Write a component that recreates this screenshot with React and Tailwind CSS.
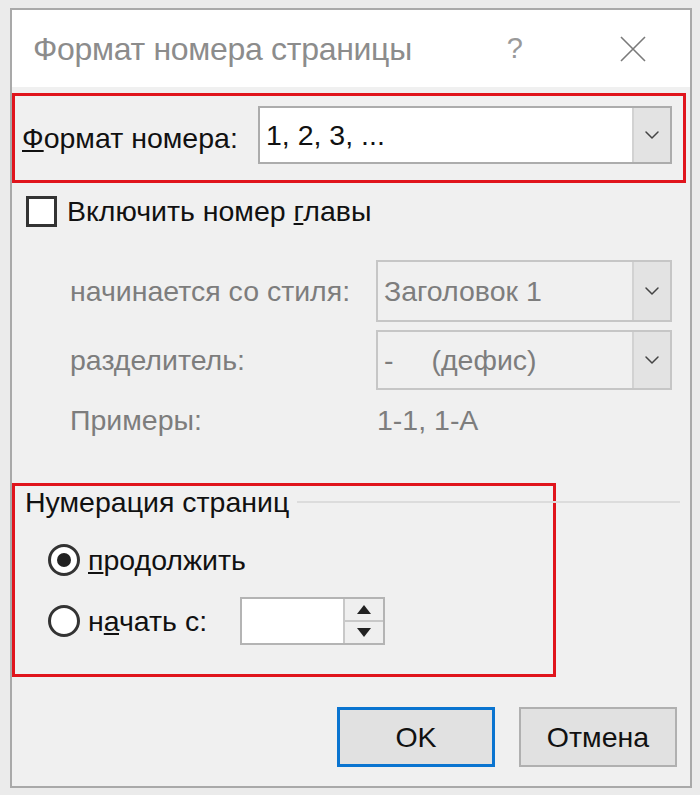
import { ChevronDown } from "lucide-react"

const font = { fontFamily: '"Liberation Sans", Arial, sans-serif' }

function Combo({ value, disabled, w, h }) {
  return (
    <div
      className={`flex ${w} ${h} border-2 ${disabled ? "border-[#c6c6c6] bg-[#f0f0f0]" : "border-[#acacac] bg-white"}`}
    >
      <div className={`flex-1 flex items-center pl-[6px] whitespace-nowrap ${disabled ? "text-[#7d7d7d]" : "text-[#111]"}`}>
        {value}
      </div>
      <div className="w-[38px] flex items-center justify-center bg-[#e3e3e3] border-l-2 border-[#d2d2d2]">
        <ChevronDown className="w-[24px] h-[24px] text-[#444]" strokeWidth={1.5} />
      </div>
    </div>
  )
}

export default function App() {
  return (
    <div className="min-h-screen bg-[#ebebeb] pt-[8px] pl-[10px] text-[28.5px] leading-none" style={font}>
      <div className="w-[682px] h-[780px] border-2 border-[#a9a9a9] bg-[#f0f0f0] flex flex-col">
        {/* title bar */}
        <div className="h-[77px] bg-white flex items-center pl-[21px] text-[#8c8c8c]">
          <span className="text-[32px] tracking-[-0.3px] whitespace-nowrap">Формат номера страницы</span>
          <span className="ml-auto text-[29px] mr-[96px] text-[#999]">?</span>
          <svg width="28" height="28" viewBox="0 0 28 28" className="mr-[43px]">
            <path d="M2 2 L26 26 M26 2 L2 26" stroke="#7a7a7a" strokeWidth="1.6" fill="none" />
          </svg>
        </div>

        {/* number format */}
        <div className="mt-[6px] w-[674px] h-[90px] border-[3px] border-[#e0141c] flex items-center pl-[7px] pb-[6px]">
          <span className="w-[236px] text-[#111] pt-[6px] whitespace-nowrap">
            <span className="underline underline-offset-2">Ф</span>ормат номера:
          </span>
          <Combo value="1, 2, 3, ..." w="w-[414px]" h="h-[58px]" />
        </div>

        {/* chapter number */}
        <div className="mt-[13px] flex items-center ml-[14px]">
          <div className="w-[31px] h-[31px] border-[3px] border-[#333] bg-white" />
          <span className="ml-[10px] text-[#111] whitespace-nowrap">
            Включить номер <span className="underline underline-offset-2">г</span>лавы
          </span>
        </div>

        <div className="mt-[33px] flex items-center pl-[58px]">
          <span className="w-[306px] text-[#7d7d7d] whitespace-nowrap">начинается со стиля:</span>
          <Combo value="Заголовок 1" disabled w="w-[296px]" h="h-[62px]" />
        </div>

        <div className="mt-[8px] flex items-center pl-[58px]">
          <span className="w-[306px] text-[#7d7d7d]">разделитель:</span>
          <Combo
            value={
              <span>
                -<span className="ml-[38px]">(дефис)</span>
              </span>
            }
            disabled
            w="w-[296px]"
            h="h-[60px]"
          />
        </div>

        <div className="mt-[10px] h-[40px] flex items-center pl-[58px] text-[#7d7d7d]">
          <span className="w-[306px]">Примеры:</span>
          <span className="ml-[1px]">1-1, 1-A</span>
        </div>

        {/* page numbering */}
        <div className="mt-[43px] w-[544px] h-[194px] border-[3px] border-[#e0141c] flex flex-col">
          <div className="h-[32px] flex items-center pl-[10px]">
            <span className="text-[#111] whitespace-nowrap flex-none">Нумерация страниц</span>
            <div className="ml-[8px] w-[383px] flex-none h-[2px] bg-[#dcdcdc]" />
          </div>

          <div className="mt-[22px] h-[40px] flex items-center pl-[33px]">
            <div className="w-[32px] h-[32px] rounded-full border-[3px] border-[#333] bg-white flex items-center justify-center">
              <div className="w-[14px] h-[14px] rounded-full bg-[#222]" />
            </div>
            <span className="ml-[8px] text-[#111]">
              <span className="underline underline-offset-2">п</span>родолжить
            </span>
          </div>

          <div className="mt-[17px] h-[48px] flex items-center pl-[33px]">
            <div className="w-[32px] h-[32px] rounded-full border-[3px] border-[#333] bg-white" />
            <span className="ml-[8px] w-[152px] text-[#111] whitespace-nowrap">
              н<span className="underline underline-offset-2">а</span>чать с:
            </span>
            <div className="w-[145px] h-[48px] border-2 border-[#b4b4b4] bg-white flex">
              <div className="flex-1" />
              <div className="w-[40px] flex flex-col bg-[#efefef] border-l-2 border-[#c8c8c8]">
                <div className="flex-1 flex items-center justify-center border-b-2 border-[#c8c8c8]">
                  <svg width="14" height="9" viewBox="0 0 14 9">
                    <path d="M7 0 L14 9 L0 9 Z" fill="#222" />
                  </svg>
                </div>
                <div className="flex-1 flex items-center justify-center">
                  <svg width="14" height="9" viewBox="0 0 14 9">
                    <path d="M0 0 L14 0 L7 9 Z" fill="#222" />
                  </svg>
                </div>
              </div>
            </div>
          </div>
        </div>

        {/* buttons */}
        <div className="mt-[30px] flex justify-end gap-[24px] mr-[13px]">
          <button className="w-[158px] h-[60px] border-[3px] border-[#0a74d0] bg-[#e1e1e1] text-[#111]">OK</button>
          <button className="w-[158px] h-[60px] border-2 border-[#b0b0b0] bg-[#e1e1e1] text-[#111]">Отмена</button>
        </div>
      </div>
    </div>
  )
}
